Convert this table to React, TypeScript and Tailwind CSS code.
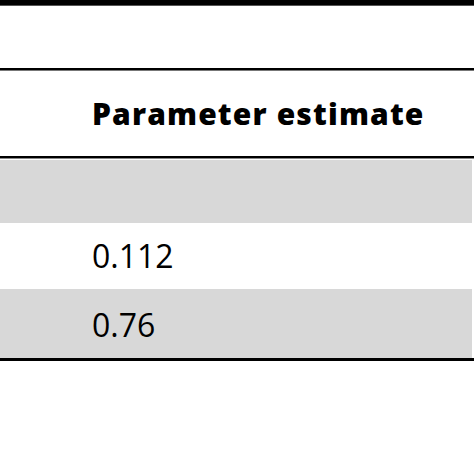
export default function App() {
  return (
    <div className="w-[474px] h-[474px] bg-white overflow-hidden text-black" style={{ fontFamily: '"Open Sans", "Noto Sans", sans-serif' }}>
      <div className="h-[6px] bg-black border-b border-[#555]" />
      <div className="h-[62px]" />
      <div className="h-[3px] bg-black border-b border-[#777]" />
      <div className="h-[85px] flex items-center pl-[92px]">
        <span className="text-[30px] font-extrabold tracking-[1.15px]">Parameter estimate</span>
      </div>
      <div className="h-[3px] bg-black border-b border-[#888]" />
      <div className="h-[64px] bg-[#d8d8d8] border-t border-white mr-[2px]" />
      <div className="h-[66px] flex items-center pl-[92px]">
        <span className="text-[32px]">0.112</span>
      </div>
      <div className="h-[69px] flex items-center pl-[92px] bg-[#d8d8d8] mr-[2px] pt-[3px]">
        <span className="text-[32px]">0.76</span>
      </div>
      <div className="h-[3px] bg-black" />
    </div>
  );
}
